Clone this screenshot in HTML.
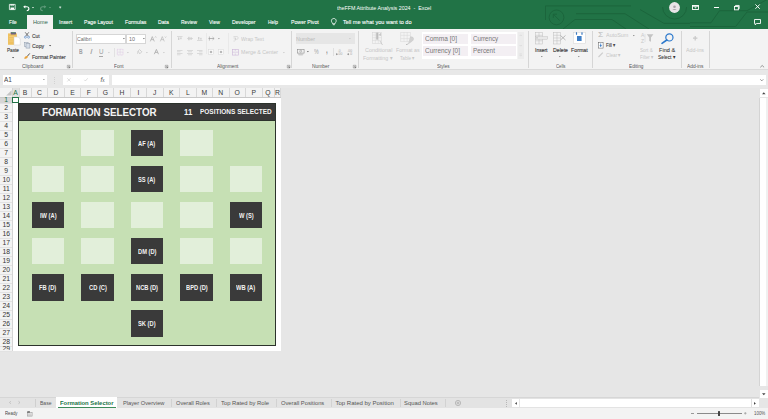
<!DOCTYPE html><html><head><meta charset="utf-8"><style>
*{margin:0;padding:0;box-sizing:border-box}
html,body{width:768px;height:419px;overflow:hidden;background:#e6e6e6;font-family:"Liberation Sans",sans-serif;position:relative}
.a{position:absolute}
.t{position:absolute;white-space:nowrap;line-height:20px;height:20px;transform-origin:0 0}
svg{position:absolute;overflow:visible}
</style></head><body>
<div class="a" style="left:0px;top:0px;width:768px;height:29px;background:#217346;"></div>
<svg style="left:0;top:0" width="768" height="29" viewBox="0 0 768 29"><g fill="none" stroke="#1a6139" stroke-width="1" opacity="0.75"><path d="M545.5 20 V5.9 H631"/><circle cx="556.5" cy="17.4" r="7.4"/><path d="M553.3 14.2 L559.7 20.6 M553.3 14.2 H557 M553.3 14.2 V17.9"/><path d="M576 13.7 H625 L649 29"/><path d="M563 29 L575 19.5 H612 L626 29"/><path d="M662.6 7 A12 12 0 0 0 686.6 7"/><path d="M640 9.5 L664 23.4 H690"/><path d="M690 22.8 H711 L719.5 10.7 H747 L768 -1"/><path d="M690 26.5 H735.7 L747 12 H768"/></g></svg>
<svg style="left:8.9px;top:4.3px;" width="6.6" height="6" viewBox="0 0 6.6 6"><path d="M0.4 0.4 H6.2 V5.6 H0.4 Z" fill="none" stroke="#fff" stroke-width="0.8"/><rect x="1.5" y="3.5" width="3.6" height="2.1" fill="#fff"/><rect x="1.9" y="0.4" width="2.8" height="1.4" fill="none" stroke="#fff" stroke-width="0.6"/></svg>
<svg style="left:22.5px;top:4.6px;" width="6.5" height="6" viewBox="0 0 6.5 6"><path d="M0.2 1.8 L2.3 0.2 V3.4Z" fill="#fff"/><path d="M2 1.8 H3.6 C5.2 1.8 5.9 2.9 5.9 3.8 C5.9 5 5 5.6 3.8 5.6" fill="none" stroke="#fff" stroke-width="1.1"/></svg>
<svg style="left:31.8px;top:7px;" width="2" height="1.2" viewBox="0 0 2 1.2"><path d="M0 0 H2 L1 1.2Z" fill="#fff"/></svg>
<svg style="left:39.6px;top:4.6px;" width="6.5" height="6" viewBox="0 0 6.5 6"><g opacity="0.3"><path d="M6.3 1.8 L4.2 0.2 V3.4Z" fill="#fff"/><path d="M4.5 1.8 H2.9 C1.3 1.8 0.6 2.9 0.6 3.8 C0.6 5 1.5 5.6 2.7 5.6" fill="none" stroke="#fff" stroke-width="1.1"/></g></svg>
<svg style="left:49.4px;top:7px;" width="2" height="1.2" viewBox="0 0 2 1.2"><path d="M0 0 H2 L1 1.2Z" fill="#fff" opacity="0.35"/></svg>
<svg style="left:59px;top:6px;" width="2.4" height="3" viewBox="0 0 2.4 3"><rect x="0.2" y="0" width="2" height="0.5" fill="#fff" opacity="0.8"/><path d="M0 1.2 H2.4 L1.2 2.5Z" fill="#fff"/></svg>
<div class="t" style="left:337px;top:-2.51px;font-size:6px;color:#fff;transform:scaleX(0.886);">theFFM Attribute Analysis 2024&nbsp; - &nbsp;Excel</div>
<svg style="left:669px;top:1.5px;" width="11" height="11" viewBox="0 0 11 11"><circle cx="5.5" cy="5.5" r="5.4" fill="#e9e4e8"/><circle cx="5.5" cy="4.7" r="1.3" fill="#a9a3a8"/><path d="M3.4 8 Q5.5 5.8 7.6 8Z" fill="#a9a3a8"/></svg>
<svg style="left:692px;top:4.6px;" width="7" height="5" viewBox="0 0 7 5"><rect x="0.5" y="0.5" width="6" height="4" fill="none" stroke="#fff" stroke-width="0.9"/><rect x="0.5" y="0.5" width="6" height="1.2" fill="#fff"/><path d="M2.3 2.3 L3.5 3.6 L4.7 2.3Z" fill="#fff"/></svg>
<div class="a" style="left:713.6px;top:6.6px;width:5px;height:0.8px;background:#fff;"></div>
<svg style="left:734px;top:4.5px;" width="5.6" height="5.2" viewBox="0 0 5.6 5.2"><rect x="0.45" y="1.45" width="3.9" height="3.4" fill="none" stroke="#fff" stroke-width="0.9"/><path d="M1.5 1.4 V0.45 H5.15 V3.8 H4.3" fill="none" stroke="#fff" stroke-width="0.9"/></svg>
<svg style="left:755px;top:4.4px;" width="5.2" height="5.2" viewBox="0 0 5.2 5.2"><path d="M0.4 0.4 L4.8 4.8 M4.8 0.4 L0.4 4.8" stroke="#fff" stroke-width="0.95"/></svg>
<svg style="left:754px;top:18.6px;" width="7" height="6.6" viewBox="0 0 7 6.6"><path d="M0.5 0.5 H6.5 V4.5 H2.5 L1.2 6 V4.5 H0.5 Z" fill="none" stroke="#fff" stroke-width="0.9"/></svg>
<div class="a" style="left:27.3px;top:14.8px;width:25.8px;height:14.2px;background:#f3f3f3;"></div>
<div class="t" style="left:9.4px;top:11.89px;font-size:6px;color:#fff;transform:scaleX(0.807);-webkit-text-stroke:0.12px #fff;">File</div>
<div class="t" style="left:59px;top:11.89px;font-size:6px;color:#fff;transform:scaleX(0.880);-webkit-text-stroke:0.12px #fff;">Insert</div>
<div class="t" style="left:84px;top:11.89px;font-size:6px;color:#fff;transform:scaleX(0.855);-webkit-text-stroke:0.12px #fff;">Page Layout</div>
<div class="t" style="left:124.8px;top:11.89px;font-size:6px;color:#fff;transform:scaleX(0.857);-webkit-text-stroke:0.12px #fff;">Formulas</div>
<div class="t" style="left:158.1px;top:11.89px;font-size:6px;color:#fff;transform:scaleX(0.859);-webkit-text-stroke:0.12px #fff;">Data</div>
<div class="t" style="left:181px;top:11.89px;font-size:6px;color:#fff;transform:scaleX(0.813);-webkit-text-stroke:0.12px #fff;">Review</div>
<div class="t" style="left:208.75px;top:11.89px;font-size:6px;color:#fff;transform:scaleX(0.849);-webkit-text-stroke:0.12px #fff;">View</div>
<div class="t" style="left:232px;top:11.89px;font-size:6px;color:#fff;transform:scaleX(0.859);-webkit-text-stroke:0.12px #fff;">Developer</div>
<div class="t" style="left:268px;top:11.89px;font-size:6px;color:#fff;transform:scaleX(0.811);-webkit-text-stroke:0.12px #fff;">Help</div>
<div class="t" style="left:290.6px;top:11.89px;font-size:6px;color:#fff;transform:scaleX(0.868);-webkit-text-stroke:0.12px #fff;">Power Pivot</div>
<div class="t" style="left:32.8px;top:11.89px;font-size:6px;color:#32654a;transform:scaleX(0.924);">Home</div>
<svg style="left:331px;top:17.8px;" width="5.6" height="7.4" viewBox="0 0 5.6 7.4"><path d="M2.8 0.5 C0.2 0.5 -0.3 3.6 1.4 4.9 L1.6 5.8 H4 L4.2 4.9 C5.9 3.6 5.4 0.5 2.8 0.5Z" fill="none" stroke="#fff" stroke-width="0.8"/><path d="M1.8 6.7 H3.8" stroke="#fff" stroke-width="0.8"/></svg>
<div class="t" style="left:342.5px;top:11.89px;font-size:6px;color:#fff;transform:scaleX(0.925);-webkit-text-stroke:0.1px #fff;">Tell me what you want to do</div>
<div class="a" style="left:0px;top:29px;width:768px;height:41px;background:#f3f3f3;"></div>
<div class="a" style="left:0px;top:69.4px;width:768px;height:0.8px;background:#dadada;"></div>
<div class="a" style="left:71.9px;top:30.5px;width:0.8px;height:37.5px;background:#d6d6d6;"></div>
<div class="a" style="left:170.6px;top:30.5px;width:0.8px;height:37.5px;background:#d6d6d6;"></div>
<div class="a" style="left:291.3px;top:30.5px;width:0.8px;height:37.5px;background:#d6d6d6;"></div>
<div class="a" style="left:357.8px;top:30.5px;width:0.8px;height:37.5px;background:#d6d6d6;"></div>
<div class="a" style="left:528px;top:30.5px;width:0.8px;height:37.5px;background:#d6d6d6;"></div>
<div class="a" style="left:592.1px;top:30.5px;width:0.8px;height:37.5px;background:#d6d6d6;"></div>
<div class="a" style="left:681.2px;top:30.5px;width:0.8px;height:37.5px;background:#d6d6d6;"></div>
<div class="a" style="left:709px;top:30.5px;width:0.8px;height:37.5px;background:#d6d6d6;"></div>
<div class="t" style="left:22px;top:56.39px;font-size:5.6px;color:#555;transform:scaleX(0.885);">Clipboard</div>
<div class="t" style="left:113.5px;top:56.39px;font-size:5.6px;color:#555;transform:scaleX(0.848);">Font</div>
<div class="t" style="left:216.6px;top:56.39px;font-size:5.6px;color:#555;transform:scaleX(0.860);">Alignment</div>
<div class="t" style="left:312px;top:56.39px;font-size:5.6px;color:#555;transform:scaleX(0.874);">Number</div>
<div class="t" style="left:437px;top:56.39px;font-size:5.6px;color:#555;transform:scaleX(0.819);">Styles</div>
<div class="t" style="left:555.5px;top:56.39px;font-size:5.6px;color:#555;transform:scaleX(0.762);">Cells</div>
<div class="t" style="left:629.4px;top:56.39px;font-size:5.6px;color:#555;transform:scaleX(0.840);">Editing</div>
<div class="t" style="left:687px;top:56.39px;font-size:5.6px;color:#555;transform:scaleX(0.869);">Add-ins</div>
<svg style="left:67.4px;top:64.9px;" width="3.2" height="3.2" viewBox="0 0 3.2 3.2"><path d="M0.3 0.3 H2.9 V2.9 H0.3Z" fill="none" stroke="#777" stroke-width="0.5"/><path d="M1.2 1.2 L2.6 2.6 M2.6 1.6 V2.6 H1.6" stroke="#555" stroke-width="0.5" fill="none"/></svg>
<svg style="left:165.4px;top:64.9px;" width="3.2" height="3.2" viewBox="0 0 3.2 3.2"><path d="M0.3 0.3 H2.9 V2.9 H0.3Z" fill="none" stroke="#777" stroke-width="0.5"/><path d="M1.2 1.2 L2.6 2.6 M2.6 1.6 V2.6 H1.6" stroke="#555" stroke-width="0.5" fill="none"/></svg>
<svg style="left:286.7px;top:64.9px;" width="3.2" height="3.2" viewBox="0 0 3.2 3.2"><path d="M0.3 0.3 H2.9 V2.9 H0.3Z" fill="none" stroke="#777" stroke-width="0.5"/><path d="M1.2 1.2 L2.6 2.6 M2.6 1.6 V2.6 H1.6" stroke="#555" stroke-width="0.5" fill="none"/></svg>
<svg style="left:352.9px;top:64.9px;" width="3.2" height="3.2" viewBox="0 0 3.2 3.2"><path d="M0.3 0.3 H2.9 V2.9 H0.3Z" fill="none" stroke="#777" stroke-width="0.5"/><path d="M1.2 1.2 L2.6 2.6 M2.6 1.6 V2.6 H1.6" stroke="#555" stroke-width="0.5" fill="none"/></svg>
<svg style="left:8px;top:32px;" width="12.6" height="13.2" viewBox="0 0 12.6 13.2"><rect x="0" y="1.4" width="8.9" height="11.4" fill="#efc160"/><path d="M1.2 4.5 H7.6 M1.2 6.8 H5.5 M1.2 9.1 H5.5" stroke="#f6d990" stroke-width="0.5"/><rect x="2.7" y="0" width="5.3" height="2.5" rx="0.4" fill="#6e6480"/><rect x="3.4" y="0" width="3.8" height="0.8" fill="#6a9a70"/><path d="M6 5 H10.3 L12.3 7 V13 H6Z" fill="#fff" stroke="#cfcfcf" stroke-width="0.5"/></svg>
<div class="t" style="left:7.1px;top:40.29px;font-size:6px;color:#444;transform:scaleX(0.776);-webkit-text-stroke:0.15px currentColor;">Paste</div>
<svg style="left:11.7px;top:56.6px;" width="2.2" height="1.3" viewBox="0 0 2.2 1.3"><path d="M0 0 H2.2 L1.1 1.3Z" fill="#444"/></svg>
<svg style="left:24px;top:32.1px;" width="6" height="6.6" viewBox="0 0 6 6.6"><path d="M1.2 0.3 L4.4 4.2 M4.8 0.3 L1.6 4.2" stroke="#555" stroke-width="0.8"/><circle cx="1.4" cy="5.2" r="1" fill="none" stroke="#6f9bd0" stroke-width="0.8"/><circle cx="4.6" cy="5.2" r="1" fill="none" stroke="#6f9bd0" stroke-width="0.8"/></svg>
<div class="t" style="left:32.2px;top:25.59px;font-size:6px;color:#444;transform:scaleX(0.825);-webkit-text-stroke:0.15px currentColor;">Cut</div>
<svg style="left:24px;top:41.8px;" width="6.2" height="6.3" viewBox="0 0 6.2 6.3"><rect x="0.3" y="0.3" width="3.8" height="4.4" fill="#e4e8ee" stroke="#8a97a8" stroke-width="0.5"/><rect x="2" y="1.7" width="3.9" height="4.4" fill="#d5dde8" stroke="#8a97a8" stroke-width="0.5"/></svg>
<div class="t" style="left:32.2px;top:35.79px;font-size:6px;color:#444;transform:scaleX(0.864);-webkit-text-stroke:0.15px currentColor;">Copy</div>
<svg style="left:48.9px;top:45.2px;" width="2.2" height="1.3" viewBox="0 0 2.2 1.3"><path d="M0 0 H2.2 L1.1 1.3Z" fill="#444"/></svg>
<svg style="left:24px;top:52.6px;" width="6.2" height="6.2" viewBox="0 0 6.2 6.2"><path d="M3.2 3.4 L5.8 0.4" stroke="#444" stroke-width="0.9"/><path d="M0.2 5.8 C0.6 3.5 1.8 2.6 3.4 3 L4 3.8 C3.6 5.2 2 6 0.2 5.8Z" fill="#e8a33d"/></svg>
<div class="t" style="left:32.2px;top:46.89px;font-size:6px;color:#444;transform:scaleX(0.852);-webkit-text-stroke:0.15px currentColor;">Format Painter</div>
<div class="a" style="left:76.2px;top:33.6px;width:50.2px;height:10px;background:#fff;border:0.6px solid #d6d6d6"></div>
<div class="a" style="left:126.4px;top:33.6px;width:19.8px;height:10px;background:#fff;border:0.6px solid #d6d6d6"></div>
<div class="t" style="left:77.2px;top:28.69px;font-size:6px;color:#6a6a6a;transform:scaleX(0.858);">Calibri</div>
<svg style="left:122.7px;top:38px;" width="1.8" height="1.3" viewBox="0 0 1.8 1.3"><path d="M0 0 H1.8 L0.9 1.3Z" fill="#666"/></svg>
<div class="t" style="left:129.3px;top:28.69px;font-size:6px;color:#707070;transform:scaleX(0.886);">10</div>
<svg style="left:142.5px;top:38px;" width="1.8" height="1.3" viewBox="0 0 1.8 1.3"><path d="M0 0 H1.8 L0.9 1.3Z" fill="#666"/></svg>
<svg style="left:149.5px;top:36px;" width="6.4" height="5.6" viewBox="0 0 6.4 5.6"><path d="M0.3 5.4 L2.3 0.6 L4.3 5.4 M1.1 3.6 H3.5" fill="none" stroke="#b0b0b0" stroke-width="0.8"/><path d="M4.8 1.6 L5.6 0.5 L6.4 1.6" fill="none" stroke="#b0b0b0" stroke-width="0.5"/></svg>
<svg style="left:159.5px;top:36px;" width="6.4" height="5.6" viewBox="0 0 6.4 5.6"><path d="M0.3 5.4 L2.3 0.6 L4.3 5.4 M1.1 3.6 H3.5" fill="none" stroke="#b8b8b8" stroke-width="0.7"/><path d="M4.8 0.5 L5.6 1.6 L6.4 0.5" fill="none" stroke="#b8b8b8" stroke-width="0.5"/></svg>
<div class="t" style="left:79.2px;top:42.39px;font-size:7.2px;color:#a0a0a0;font-weight:bold;transform:scaleX(0.694);">B</div>
<div class="t" style="left:89.6px;top:42.39px;font-size:7.2px;color:#a0a0a0;transform:scaleX(1.290);font-style:italic;">I</div>
<div class="t" style="left:98.8px;top:41.99px;font-size:7px;color:#a0a0a0;transform:scaleX(0.893);">U</div>
<div class="a" style="left:98.8px;top:55.6px;width:4.5px;height:0.5px;background:#a8a8a8;"></div>
<svg style="left:108.2px;top:51.8px;" width="1.8" height="1.3" viewBox="0 0 1.8 1.3"><path d="M0 0 H1.8 L0.9 1.3Z" fill="#c6c6c6"/></svg>
<div class="a" style="left:114.2px;top:47.5px;width:0.6px;height:9px;background:#e2e2e2;"></div>
<svg style="left:117px;top:49.2px;" width="6.3" height="6.3" viewBox="0 0 6.3 6.3"><rect x="0.3" y="0.3" width="5.7" height="5.7" fill="none" stroke="#d8b8e0" stroke-width="0.6" stroke-dasharray="0.8 0.6"/><path d="M3.15 0.3 V6 M0.3 3.15 H6" stroke="#d8c8e0" stroke-width="0.4"/></svg>
<svg style="left:127.1px;top:51.8px;" width="1.8" height="1.3" viewBox="0 0 1.8 1.3"><path d="M0 0 H1.8 L0.9 1.3Z" fill="#c6c6c6"/></svg>
<svg style="left:137.1px;top:49px;" width="5.4" height="6.4" viewBox="0 0 5.4 6.4"><path d="M1 2.2 L2.6 0.6 L4.8 2.8 L2.8 4.8 Z" fill="none" stroke="#b8b8b8" stroke-width="0.6"/><path d="M1 2.2 C0.4 3.5 0.5 4.4 0.8 5" stroke="#b8b8b8" stroke-width="0.5" fill="none"/></svg>
<svg style="left:146px;top:51.8px;" width="1.8" height="1.3" viewBox="0 0 1.8 1.3"><path d="M0 0 H1.8 L0.9 1.3Z" fill="#c6c6c6"/></svg>
<svg style="left:154px;top:49px;" width="4.8" height="5.4" viewBox="0 0 4.8 5.4"><path d="M0.3 5.2 L2.4 0.4 L4.5 5.2 M1.1 3.4 H3.7" fill="none" stroke="#a8a8a8" stroke-width="0.8"/></svg>
<svg style="left:162.9px;top:51.8px;" width="1.8" height="1.3" viewBox="0 0 1.8 1.3"><path d="M0 0 H1.8 L0.9 1.3Z" fill="#c6c6c6"/></svg>
<svg style="left:177px;top:35.5px;" width="5.5" height="5" viewBox="0 0 5.5 5"><rect x="0" y="0" width="5.5" height="0.7" fill="#cfcfcf"/><rect x="1" y="1.4" width="1.4" height="2.6" fill="#cfcfcf"/><rect x="3.2" y="1.4" width="1.4" height="1.8" fill="#cfcfcf"/></svg>
<svg style="left:186.6px;top:35.5px;" width="6" height="5" viewBox="0 0 6 5"><rect x="0" y="2.2" width="6" height="0.7" fill="#cfcfcf"/><rect x="1.2" y="0.8" width="1.4" height="3.5" fill="#cfcfcf"/><rect x="3.4" y="1.3" width="1.4" height="2.5" fill="#cfcfcf"/></svg>
<svg style="left:197.3px;top:35.5px;" width="5.5" height="5" viewBox="0 0 5.5 5"><rect x="0" y="4.3" width="5.5" height="0.7" fill="#cfcfcf"/><rect x="1" y="1" width="1.4" height="2.6" fill="#cfcfcf"/><rect x="3.2" y="1.8" width="1.4" height="1.8" fill="#cfcfcf"/></svg>
<svg style="left:208.3px;top:35.8px;" width="7" height="5" viewBox="0 0 7 5"><path d="M0.5 2.5 H6" stroke="#9a9a9a" stroke-width="0.7"/><path d="M4.5 1 L6.2 2.5 L4.5 4" fill="none" stroke="#9a9a9a" stroke-width="0.6"/><path d="M1.4 0.5 V4.6" stroke="#9a9a9a" stroke-width="0.6"/></svg>
<svg style="left:218.3px;top:38.1px;" width="1.8" height="1.3" viewBox="0 0 1.8 1.3"><path d="M0 0 H1.8 L0.9 1.3Z" fill="#9a9a9a"/></svg>
<div class="a" style="left:206px;top:33px;width:0.5px;height:21px;background:#e9e9e9;"></div>
<div class="a" style="left:228.4px;top:33px;width:0.5px;height:21px;background:#e9e9e9;"></div>
<svg style="left:232.5px;top:35.6px;" width="5.6" height="6" viewBox="0 0 5.6 6"><path d="M0.5 0.5 H4 C5.6 0.5 5.6 3.3 4 3.3 H2.2" fill="none" stroke="#cfcfcf" stroke-width="0.6"/><path d="M0.5 2 H3 M0.5 5 H2" stroke="#cfcfcf" stroke-width="0.6"/><path d="M2.8 2.4 L1.8 3.3 L2.8 4.2" fill="none" stroke="#aaa" stroke-width="0.5"/></svg>
<div class="t" style="left:241px;top:28.69px;font-size:6px;color:#c6c6c6;transform:scaleX(0.851);">Wrap Text</div>
<svg style="left:177px;top:49.6px;" width="5.5" height="6" viewBox="0 0 5.5 6"><rect x="0" y="0.0" width="5.5" height="0.7" fill="#cfcfcf"/><rect x="0" y="1.5" width="3.5" height="0.7" fill="#cfcfcf"/><rect x="0" y="3.0" width="5.5" height="0.7" fill="#cfcfcf"/><rect x="0" y="4.5" width="3.5" height="0.7" fill="#cfcfcf"/></svg>
<svg style="left:186.6px;top:49.6px;" width="6" height="6" viewBox="0 0 6 6"><rect x="0.0" y="0.0" width="6" height="0.7" fill="#cfcfcf"/><rect x="1.0" y="1.5" width="4" height="0.7" fill="#cfcfcf"/><rect x="0.0" y="3.0" width="6" height="0.7" fill="#cfcfcf"/><rect x="1.0" y="4.5" width="4" height="0.7" fill="#cfcfcf"/></svg>
<svg style="left:197.3px;top:49.6px;" width="5.5" height="6" viewBox="0 0 5.5 6"><rect x="0.0" y="0.0" width="5.5" height="0.7" fill="#cfcfcf"/><rect x="2.0" y="1.5" width="3.5" height="0.7" fill="#cfcfcf"/><rect x="0.0" y="3.0" width="5.5" height="0.7" fill="#cfcfcf"/><rect x="2.0" y="4.5" width="3.5" height="0.7" fill="#cfcfcf"/></svg>
<svg style="left:208px;top:49.2px;" width="6" height="6" viewBox="0 0 6 6"><rect x="0.3" y="0.3" width="5.4" height="5.4" fill="#fbfbfb" stroke="#d6d6d6" stroke-width="0.5"/><path d="M1.8 3 H4.2 M3 1.8 V4.2" stroke="#8a8a8a" stroke-width="0.7"/></svg>
<svg style="left:217.5px;top:49.2px;" width="6" height="6" viewBox="0 0 6 6"><rect x="0.3" y="0.3" width="5.4" height="5.4" fill="#fbfbfb" stroke="#d6d6d6" stroke-width="0.5"/><path d="M1.8 3 H4.2 M3 1.8 V4.2" stroke="#8a8a8a" stroke-width="0.7"/></svg>
<svg style="left:232.2px;top:49px;" width="6.6" height="6.4" viewBox="0 0 6.6 6.4"><rect x="0.3" y="0.3" width="6" height="5.8" fill="none" stroke="#cbb5d8" stroke-width="0.6"/><path d="M0.3 3.2 H6.3 M3.3 0.3 V2 M3.3 4.4 V6.1" stroke="#cbb5d8" stroke-width="0.5"/></svg>
<div class="t" style="left:241px;top:42.39px;font-size:6px;color:#c6c6c6;transform:scaleX(0.876);">Merge &amp; Center</div>
<svg style="left:283.1px;top:51.8px;" width="1.8" height="1.3" viewBox="0 0 1.8 1.3"><path d="M0 0 H1.8 L0.9 1.3Z" fill="#c6c6c6"/></svg>
<div class="a" style="left:295.5px;top:33.1px;width:59.7px;height:10.5px;background:#e6e6e6;"></div>
<div class="t" style="left:296.4px;top:28.59px;font-size:6px;color:#b9b9b9;transform:scaleX(0.895);">Number</div>
<svg style="left:349.3px;top:38px;" width="1.8" height="1.3" viewBox="0 0 1.8 1.3"><path d="M0 0 H1.8 L0.9 1.3Z" fill="#c4c4c4"/></svg>
<svg style="left:296.8px;top:48.6px;" width="7.4" height="6.4" viewBox="0 0 7.4 6.4"><rect x="0.3" y="0.3" width="6.8" height="3.8" fill="none" stroke="#8c8c8c" stroke-width="0.6"/><circle cx="3.7" cy="2.2" r="1" fill="none" stroke="#8c8c8c" stroke-width="0.5"/><path d="M1 5.2 H6.4 M1.6 6 H5.8" stroke="#a8a8a8" stroke-width="0.5"/></svg>
<svg style="left:307.3px;top:51.4px;" width="1.8" height="1.3" viewBox="0 0 1.8 1.3"><path d="M0 0 H1.8 L0.9 1.3Z" fill="#555"/></svg>
<div class="t" style="left:313.9px;top:41.79px;font-size:7.2px;color:#a6a6a6;transform:scaleX(0.733);">%</div>
<div class="t" style="left:326.2px;top:40.19px;font-size:9px;color:#8a8a8a;font-weight:bold;transform:scaleX(0.675);">,</div>
<div class="a" style="left:332.6px;top:48px;width:0.5px;height:8px;background:#e0e0e0;"></div>
<svg style="left:336px;top:48.6px;" width="7.4" height="6.6" viewBox="0 0 7.4 6.6"><text x="1.8" y="2.8" font-size="3.4" fill="#a8a8a8" font-family="Liberation Sans">.0</text><text x="1.6" y="6.4" font-size="3.4" fill="#a8a8a8" font-family="Liberation Sans">.00</text><path d="M0 5.2 H2 M0 5.2 L0.9 4.4 M0 5.2 L0.9 6" stroke="#6a6a6a" stroke-width="0.5" fill="none"/></svg>
<svg style="left:347.4px;top:48.6px;" width="6.4" height="6.6" viewBox="0 0 6.4 6.6"><text x="0.4" y="2.8" font-size="3.4" fill="#a8a8a8" font-family="Liberation Sans">.00</text><text x="2.4" y="6.4" font-size="3.4" fill="#a8a8a8" font-family="Liberation Sans">.0</text><path d="M0 5.2 H2 M2 5.2 L1.1 4.4 M2 5.2 L1.1 6" stroke="#6a6a6a" stroke-width="0.5" fill="none"/></svg>
<svg style="left:372px;top:31.9px;" width="12.6" height="13.4" viewBox="0 0 12.6 13.4"><g stroke="#d4d4d4" stroke-width="0.5" fill="none"><rect x="0.3" y="0.3" width="9" height="11"/><path d="M3.3 0.3 V11.3 M6.3 0.3 V11.3 M0.3 3 H9.3 M0.3 5.7 H9.3 M0.3 8.4 H9.3"/></g><rect x="4.2" y="0.6" width="2" height="7" fill="#bdbdbd"/><path d="M6.5 3 L9 0.8 V4Z" fill="#c8c8c8"/><path d="M8 9 L10.5 13" stroke="#bdbdbd" stroke-width="0.7"/></svg>
<div class="t" style="left:364.6px;top:40.24px;font-size:6px;color:#c6c6c6;transform:scaleX(0.912);">Conditional</div>
<div class="t" style="left:362.5px;top:47.74px;font-size:6px;color:#c6c6c6;transform:scaleX(0.876);">Formatting ▾</div>
<svg style="left:400px;top:31.9px;" width="15.4" height="13.4" viewBox="0 0 15.4 13.4"><g stroke="#d8d8d8" stroke-width="0.5" fill="none"><rect x="0.8" y="0.3" width="9.5" height="9.5"/><path d="M0.8 3.4 H10.3 M0.8 6.6 H10.3 M4 0.3 V9.8 M7.2 0.3 V9.8"/></g><path d="M10 5 C14 4 15 8 11 10 L8 12" fill="#d2d2d2" stroke="#c4c4c4" stroke-width="0.5"/><path d="M7.5 11.8 L6.5 13" stroke="#999" stroke-width="1"/></svg>
<div class="t" style="left:396.3px;top:40.24px;font-size:6px;color:#c6c6c6;transform:scaleX(0.870);">Format as</div>
<div class="t" style="left:399.6px;top:47.74px;font-size:6px;color:#c6c6c6;transform:scaleX(0.770);">Table ▾</div>
<div class="a" style="left:422px;top:31.6px;width:95px;height:27px;background:#fff;"></div>
<div class="a" style="left:423px;top:33.6px;width:45.4px;height:10.2px;background:#f3eff3;"></div>
<div class="a" style="left:470.8px;top:33.6px;width:44.8px;height:10.2px;background:#f3eff3;"></div>
<div class="a" style="left:423px;top:46px;width:45.4px;height:10.2px;background:#f3eff3;"></div>
<div class="a" style="left:470.8px;top:46px;width:44.8px;height:10.2px;background:#f3eff3;"></div>
<div class="t" style="left:425px;top:28.69px;font-size:6.8px;color:#777;transform:scaleX(0.962);">Comma [0]</div>
<div class="t" style="left:472.6px;top:28.69px;font-size:6.8px;color:#777;transform:scaleX(0.914);">Currency</div>
<div class="t" style="left:425px;top:41.09px;font-size:6.8px;color:#777;transform:scaleX(0.943);">Currency [0]</div>
<div class="t" style="left:472.6px;top:41.09px;font-size:6.8px;color:#777;transform:scaleX(0.935);">Percent</div>
<div class="a" style="left:517.6px;top:31.6px;width:6.8px;height:27px;background:#ececec;"></div>
<svg style="left:519.3px;top:33.8px;" width="3.4" height="23" viewBox="0 0 3.4 23"><path d="M0.6 2 L1.7 0.8 L2.8 2" fill="none" stroke="#ccc" stroke-width="0.5"/><path d="M0.6 11 L1.7 12.2 L2.8 11" fill="none" stroke="#ccc" stroke-width="0.5"/><path d="M0.6 20 H2.8 M0.6 21 L1.7 22.2 L2.8 21" fill="none" stroke="#ccc" stroke-width="0.5"/></svg>
<svg style="left:535.4px;top:31.9px;" width="13" height="12.9" viewBox="0 0 13 12.9"><g stroke="#bdbdbd" stroke-width="0.5" fill="none"><rect x="0.5" y="0.5" width="7" height="11.5"/><path d="M4 0.5 V12 M0.5 3.3 H7.5 M0.5 6 H7.5 M0.5 8.8 H7.5"/></g><rect x="0.6" y="4.6" width="12" height="2.6" fill="#e8e8e8" stroke="#b8b8b8" stroke-width="0.4"/><path d="M1 5.9 H3" stroke="#aaa" stroke-width="0.6"/></svg>
<div class="t" style="left:535.4px;top:40.24px;font-size:6px;color:#3a3a3a;transform:scaleX(0.833);-webkit-text-stroke:0.15px currentColor;">Insert</div>
<svg style="left:540.9px;top:56.3px;" width="1.6" height="1.3" viewBox="0 0 1.6 1.3"><path d="M0 0 H1.6 L0.8 1.3Z" fill="#777"/></svg>
<svg style="left:553px;top:31.9px;" width="13.6" height="12.9" viewBox="0 0 13.6 12.9"><g stroke="#bdbdbd" stroke-width="0.5" fill="none"><rect x="0.5" y="0.5" width="7" height="11.5"/><path d="M4 0.5 V12 M0.5 3.3 H7.5 M0.5 6 H7.5 M0.5 8.8 H7.5"/></g><path d="M7.5 3.5 L12.5 8 M12.5 3.5 L7.5 8" stroke="#a8a8a8" stroke-width="0.8"/></svg>
<div class="t" style="left:552.9px;top:40.24px;font-size:6px;color:#3a3a3a;transform:scaleX(0.865);-webkit-text-stroke:0.15px currentColor;">Delete</div>
<svg style="left:559.2px;top:56.3px;" width="1.6" height="1.3" viewBox="0 0 1.6 1.3"><path d="M0 0 H1.6 L0.8 1.3Z" fill="#777"/></svg>
<svg style="left:572.9px;top:31.9px;" width="12.6" height="12" viewBox="0 0 12.6 12"><rect x="0.3" y="0.3" width="12" height="11.4" fill="#fff" stroke="#d0d0d0" stroke-width="0.5"/><path d="M3.5 0.2 V2.2 M9 0.2 V2.2" stroke="#3b78c0" stroke-width="1"/><path d="M2.5 1.8 L3.5 3 L4.5 1.8 M8 1.8 L9 3 L10 1.8" fill="#3b78c0"/><rect x="4" y="4" width="4.6" height="5" fill="#3d7dc6"/></svg>
<div class="t" style="left:570.8px;top:40.24px;font-size:6px;color:#3a3a3a;transform:scaleX(0.879);-webkit-text-stroke:0.15px currentColor;">Format</div>
<svg style="left:578px;top:56.3px;" width="1.6" height="1.3" viewBox="0 0 1.6 1.3"><path d="M0 0 H1.6 L0.8 1.3Z" fill="#777"/></svg>
<div class="t" style="left:598.4px;top:25.29px;font-size:6.6px;color:#b8b8b8;transform:scaleX(1.295);">Σ</div>
<div class="t" style="left:606px;top:25.29px;font-size:6px;color:#c6c6c6;transform:scaleX(0.907);">AutoSum</div>
<svg style="left:633.3px;top:34.7px;" width="1.6" height="1.3" viewBox="0 0 1.6 1.3"><path d="M0 0 H1.6 L0.8 1.3Z" fill="#777"/></svg>
<svg style="left:598px;top:41.6px;" width="5.4" height="6.4" viewBox="0 0 5.4 6.4"><rect x="0.3" y="0.3" width="4.8" height="5.8" fill="#fff" stroke="#555" stroke-width="0.5"/><path d="M2.7 1.5 V4.2" stroke="#2e75c5" stroke-width="0.8"/><path d="M1.4 3.3 L2.7 4.9 L4 3.3Z" fill="#2e75c5"/></svg>
<div class="t" style="left:605.5px;top:34.99px;font-size:6px;color:#444;transform:scaleX(0.745);-webkit-text-stroke:0.15px currentColor;">Fill ▾</div>
<svg style="left:598px;top:52.4px;" width="5.4" height="5.4" viewBox="0 0 5.4 5.4"><path d="M0.5 5 L4.8 0.6" stroke="#cfcfcf" stroke-width="1.3"/></svg>
<div class="t" style="left:605.5px;top:45.39px;font-size:6px;color:#c6c6c6;transform:scaleX(0.780);">Clear ▾</div>
<svg style="left:641px;top:31.9px;" width="12.6" height="11.6" viewBox="0 0 12.6 11.6"><text x="0" y="4.6" font-size="5" fill="#c8c8c8" font-family="Liberation Sans">A</text><text x="0" y="11" font-size="5" fill="#c8c8c8" font-family="Liberation Sans">Z</text><path d="M4 2 V10" stroke="#ccc" stroke-width="0.5"/><path d="M5.8 2.2 H12.4 L10 5.6 V9.8 L8.2 9 V5.6Z" fill="#c4c4c4"/></svg>
<div class="t" style="left:639.8px;top:40.19px;font-size:6px;color:#c6c6c6;transform:scaleX(0.761);">Sort &amp;</div>
<div class="t" style="left:639.8px;top:47.09px;font-size:6px;color:#c6c6c6;transform:scaleX(0.738);">Filter ▾</div>
<svg style="left:660.5px;top:33px;" width="13.2" height="11" viewBox="0 0 13.2 11"><circle cx="8.4" cy="4.4" r="3.6" fill="none" stroke="#2b78cc" stroke-width="1.2"/><path d="M5.8 7 L1 10.4" stroke="#2b78cc" stroke-width="1.6" stroke-linecap="round"/></svg>
<div class="t" style="left:658.7px;top:40.19px;font-size:6px;color:#333;transform:scaleX(0.928);-webkit-text-stroke:0.06px currentColor;">Find &amp;</div>
<div class="t" style="left:657.6px;top:47.09px;font-size:6px;color:#333;transform:scaleX(0.806);-webkit-text-stroke:0.06px currentColor;">Select ▾</div>
<svg style="left:693px;top:35.6px;" width="4.4" height="4.4" viewBox="0 0 4.4 4.4"><path d="M2.2 0 V4.4 M0 2.2 H4.4" stroke="#c8c8c8" stroke-width="1.2"/></svg>
<div class="t" style="left:685.7px;top:39.99px;font-size:6px;color:#c6c6c6;transform:scaleX(0.885);">Add-ins</div>
<svg style="left:760px;top:65.4px;" width="4.4" height="2.6" viewBox="0 0 4.4 2.6"><path d="M0.3 2.3 L2.2 0.5 L4.1 2.3" fill="none" stroke="#555" stroke-width="0.6"/></svg>
<div class="a" style="left:0px;top:70.2px;width:768px;height:17.8px;background:#e8e8e8;"></div>
<div class="a" style="left:3.1px;top:74.6px;width:43.8px;height:10.2px;background:#fff;"></div>
<div class="t" style="left:4.4px;top:69.74px;font-size:6.6px;color:#444;transform:scaleX(0.965);">A1</div>
<svg style="left:43px;top:79.3px;" width="1.8" height="1" viewBox="0 0 1.8 1"><path d="M0 0 H1.8 L0.9 1Z" fill="#777"/></svg>
<div class="a" style="left:53.6px;top:76.5px;width:0.8px;height:0.8px;background:#d2d2d2;"></div>
<div class="a" style="left:53.6px;top:78.5px;width:0.8px;height:0.8px;background:#d2d2d2;"></div>
<div class="a" style="left:53.6px;top:80.5px;width:0.8px;height:0.8px;background:#d2d2d2;"></div>
<div class="a" style="left:53.6px;top:82.5px;width:0.8px;height:0.8px;background:#d2d2d2;"></div>
<div class="a" style="left:62.5px;top:74.6px;width:46.9px;height:10.2px;background:#fff;"></div>
<svg style="left:66.9px;top:77.6px;" width="3.8" height="3.8" viewBox="0 0 3.8 3.8"><path d="M0.3 0.3 L3.5 3.5 M3.5 0.3 L0.3 3.5" stroke="#c6c6c6" stroke-width="0.6"/></svg>
<svg style="left:83.6px;top:77.8px;" width="4" height="3.4" viewBox="0 0 4 3.4"><path d="M0.3 1.8 L1.4 3 L3.7 0.3" fill="none" stroke="#c6c6c6" stroke-width="0.6"/></svg>
<div class="t" style="left:100.4px;top:69.79px;font-size:6.6px;color:#555;"><i>f</i><span style="font-size:0.7em">x</span></div>
<div class="a" style="left:111.7px;top:74.6px;width:654.3px;height:10.2px;background:#fff;"></div>
<svg style="left:760.3px;top:78.9px;" width="3.6" height="2.2" viewBox="0 0 3.6 2.2"><path d="M0.3 0.3 L1.8 1.9 L3.3 0.3" fill="none" stroke="#555" stroke-width="0.6"/></svg>
<div class="a" style="left:0px;top:88px;width:281px;height:9.2px;background:#f3f3f3;"></div>
<div class="a" style="left:0px;top:97.2px;width:12.3px;height:254px;background:#f3f3f3;"></div>
<div class="a" style="left:12.3px;top:97.2px;width:268.7px;height:254px;background:#fff;"></div>
<div class="a" style="left:18.55px;top:88px;width:0.7px;height:9.2px;background:#d8d8d8;"></div>
<div class="a" style="left:30.95px;top:88px;width:0.7px;height:9.2px;background:#d8d8d8;"></div>
<div class="a" style="left:47.42px;top:88px;width:0.7px;height:9.2px;background:#d8d8d8;"></div>
<div class="a" style="left:63.89px;top:88px;width:0.7px;height:9.2px;background:#d8d8d8;"></div>
<div class="a" style="left:80.36px;top:88px;width:0.7px;height:9.2px;background:#d8d8d8;"></div>
<div class="a" style="left:96.83px;top:88px;width:0.7px;height:9.2px;background:#d8d8d8;"></div>
<div class="a" style="left:113.3px;top:88px;width:0.7px;height:9.2px;background:#d8d8d8;"></div>
<div class="a" style="left:129.77px;top:88px;width:0.7px;height:9.2px;background:#d8d8d8;"></div>
<div class="a" style="left:146.24px;top:88px;width:0.7px;height:9.2px;background:#d8d8d8;"></div>
<div class="a" style="left:162.71px;top:88px;width:0.7px;height:9.2px;background:#d8d8d8;"></div>
<div class="a" style="left:179.18px;top:88px;width:0.7px;height:9.2px;background:#d8d8d8;"></div>
<div class="a" style="left:195.65px;top:88px;width:0.7px;height:9.2px;background:#d8d8d8;"></div>
<div class="a" style="left:212.12px;top:88px;width:0.7px;height:9.2px;background:#d8d8d8;"></div>
<div class="a" style="left:228.59px;top:88px;width:0.7px;height:9.2px;background:#d8d8d8;"></div>
<div class="a" style="left:245.06px;top:88px;width:0.7px;height:9.2px;background:#d8d8d8;"></div>
<div class="a" style="left:261.53px;top:88px;width:0.7px;height:9.2px;background:#d8d8d8;"></div>
<div class="a" style="left:273.65px;top:88px;width:0.7px;height:9.2px;background:#d8d8d8;"></div>
<div class="a" style="left:280.45px;top:88px;width:0.7px;height:9.2px;background:#d8d8d8;"></div>
<div class="a" style="left:0px;top:102.65px;width:12.3px;height:0.7px;background:#e2e2e2;"></div>
<div class="a" style="left:0px;top:111.65px;width:12.3px;height:0.7px;background:#e2e2e2;"></div>
<div class="a" style="left:0px;top:120.65px;width:12.3px;height:0.7px;background:#e2e2e2;"></div>
<div class="a" style="left:0px;top:129.65px;width:12.3px;height:0.7px;background:#e2e2e2;"></div>
<div class="a" style="left:0px;top:138.65px;width:12.3px;height:0.7px;background:#e2e2e2;"></div>
<div class="a" style="left:0px;top:147.65px;width:12.3px;height:0.7px;background:#e2e2e2;"></div>
<div class="a" style="left:0px;top:156.65px;width:12.3px;height:0.7px;background:#e2e2e2;"></div>
<div class="a" style="left:0px;top:165.65px;width:12.3px;height:0.7px;background:#e2e2e2;"></div>
<div class="a" style="left:0px;top:174.65px;width:12.3px;height:0.7px;background:#e2e2e2;"></div>
<div class="a" style="left:0px;top:183.65px;width:12.3px;height:0.7px;background:#e2e2e2;"></div>
<div class="a" style="left:0px;top:192.65px;width:12.3px;height:0.7px;background:#e2e2e2;"></div>
<div class="a" style="left:0px;top:201.65px;width:12.3px;height:0.7px;background:#e2e2e2;"></div>
<div class="a" style="left:0px;top:210.65px;width:12.3px;height:0.7px;background:#e2e2e2;"></div>
<div class="a" style="left:0px;top:219.65px;width:12.3px;height:0.7px;background:#e2e2e2;"></div>
<div class="a" style="left:0px;top:228.65px;width:12.3px;height:0.7px;background:#e2e2e2;"></div>
<div class="a" style="left:0px;top:237.65px;width:12.3px;height:0.7px;background:#e2e2e2;"></div>
<div class="a" style="left:0px;top:246.65px;width:12.3px;height:0.7px;background:#e2e2e2;"></div>
<div class="a" style="left:0px;top:255.65px;width:12.3px;height:0.7px;background:#e2e2e2;"></div>
<div class="a" style="left:0px;top:264.65px;width:12.3px;height:0.7px;background:#e2e2e2;"></div>
<div class="a" style="left:0px;top:273.65px;width:12.3px;height:0.7px;background:#e2e2e2;"></div>
<div class="a" style="left:0px;top:282.65px;width:12.3px;height:0.7px;background:#e2e2e2;"></div>
<div class="a" style="left:0px;top:291.65px;width:12.3px;height:0.7px;background:#e2e2e2;"></div>
<div class="a" style="left:0px;top:300.65px;width:12.3px;height:0.7px;background:#e2e2e2;"></div>
<div class="a" style="left:0px;top:309.65px;width:12.3px;height:0.7px;background:#e2e2e2;"></div>
<div class="a" style="left:0px;top:318.65px;width:12.3px;height:0.7px;background:#e2e2e2;"></div>
<div class="a" style="left:0px;top:327.65px;width:12.3px;height:0.7px;background:#e2e2e2;"></div>
<div class="a" style="left:0px;top:336.65px;width:12.3px;height:0.7px;background:#e2e2e2;"></div>
<div class="a" style="left:0px;top:345.65px;width:12.3px;height:0.7px;background:#e2e2e2;"></div>
<div class="a" style="left:0px;top:350.65px;width:12.3px;height:0.7px;background:#e2e2e2;"></div>
<div class="a" style="left:0px;top:97.2px;width:12.3px;height:5.8px;background:#d6d6d6;"></div>
<div class="a" style="left:12.3px;top:88px;width:6.6px;height:9.2px;background:#e1e1e1;"></div>
<div class="a" style="left:0px;top:96.8px;width:281px;height:0.7px;background:#c8c8c8;"></div>
<div class="a" style="left:11.9px;top:88px;width:0.7px;height:263px;background:#d4d4d4;"></div>
<svg style="left:5.5px;top:90.2px;" width="6" height="6" viewBox="0 0 6 6"><path d="M5.6 0.2 V5.6 H0.2Z" fill="#c4c4c4"/></svg>
<div class="t" style="left:13.32px;top:83.44px;font-size:6.8px;color:#217346;">A</div>
<div class="t" style="left:22.84px;top:83.44px;font-size:6.8px;color:#3a3a3a;">B</div>
<div class="t" style="left:37.09px;top:83.44px;font-size:6.8px;color:#3a3a3a;">C</div>
<div class="t" style="left:53.56px;top:83.44px;font-size:6.8px;color:#3a3a3a;">D</div>
<div class="t" style="left:70.21px;top:83.44px;font-size:6.8px;color:#3a3a3a;">E</div>
<div class="t" style="left:86.87px;top:83.44px;font-size:6.8px;color:#3a3a3a;">F</div>
<div class="t" style="left:102.76px;top:83.44px;font-size:6.8px;color:#3a3a3a;">G</div>
<div class="t" style="left:119.44px;top:83.44px;font-size:6.8px;color:#3a3a3a;">H</div>
<div class="t" style="left:137.4px;top:83.44px;font-size:6.8px;color:#3a3a3a;">I</div>
<div class="t" style="left:153.12px;top:83.44px;font-size:6.8px;color:#3a3a3a;">J</div>
<div class="t" style="left:169.03px;top:83.44px;font-size:6.8px;color:#3a3a3a;">K</div>
<div class="t" style="left:185.88px;top:83.44px;font-size:6.8px;color:#3a3a3a;">L</div>
<div class="t" style="left:201.4px;top:83.44px;font-size:6.8px;color:#3a3a3a;">M</div>
<div class="t" style="left:218.26px;top:83.44px;font-size:6.8px;color:#3a3a3a;">N</div>
<div class="t" style="left:234.52px;top:83.44px;font-size:6.8px;color:#3a3a3a;">O</div>
<div class="t" style="left:251.38px;top:83.44px;font-size:6.8px;color:#3a3a3a;">P</div>
<div class="t" style="left:265.29px;top:83.44px;font-size:6.8px;color:#3a3a3a;">Q</div>
<div class="t" style="left:274.95px;top:83.44px;font-size:6.8px;color:#3a3a3a;">R</div>
<div class="a" style="left:0;top:0;width:12.3px;height:350.2px;overflow:hidden">
<div class="t" style="left:4.31px;top:90.29px;font-size:6.8px;color:#217346;">1</div>
<div class="t" style="left:4.31px;top:97.69px;font-size:6.8px;color:#333;">2</div>
<div class="t" style="left:4.31px;top:106.69px;font-size:6.8px;color:#333;">3</div>
<div class="t" style="left:4.31px;top:115.69px;font-size:6.8px;color:#333;">4</div>
<div class="t" style="left:4.31px;top:124.69px;font-size:6.8px;color:#333;">5</div>
<div class="t" style="left:4.31px;top:133.69px;font-size:6.8px;color:#333;">6</div>
<div class="t" style="left:4.31px;top:142.69px;font-size:6.8px;color:#333;">7</div>
<div class="t" style="left:4.31px;top:151.69px;font-size:6.8px;color:#333;">8</div>
<div class="t" style="left:4.31px;top:160.69px;font-size:6.8px;color:#333;">9</div>
<div class="t" style="left:2.43px;top:169.69px;font-size:6.8px;color:#333;">10</div>
<div class="t" style="left:2.66px;top:178.69px;font-size:6.8px;color:#333;">11</div>
<div class="t" style="left:2.43px;top:187.69px;font-size:6.8px;color:#333;">12</div>
<div class="t" style="left:2.43px;top:196.69px;font-size:6.8px;color:#333;">13</div>
<div class="t" style="left:2.43px;top:205.69px;font-size:6.8px;color:#333;">14</div>
<div class="t" style="left:2.43px;top:214.69px;font-size:6.8px;color:#333;">15</div>
<div class="t" style="left:2.43px;top:223.69px;font-size:6.8px;color:#333;">16</div>
<div class="t" style="left:2.43px;top:232.69px;font-size:6.8px;color:#333;">17</div>
<div class="t" style="left:2.43px;top:241.69px;font-size:6.8px;color:#333;">18</div>
<div class="t" style="left:2.43px;top:250.69px;font-size:6.8px;color:#333;">19</div>
<div class="t" style="left:2.43px;top:259.69px;font-size:6.8px;color:#333;">20</div>
<div class="t" style="left:2.43px;top:268.69px;font-size:6.8px;color:#333;">21</div>
<div class="t" style="left:2.43px;top:277.69px;font-size:6.8px;color:#333;">22</div>
<div class="t" style="left:2.43px;top:286.69px;font-size:6.8px;color:#333;">23</div>
<div class="t" style="left:2.43px;top:295.69px;font-size:6.8px;color:#333;">24</div>
<div class="t" style="left:2.43px;top:304.69px;font-size:6.8px;color:#333;">25</div>
<div class="t" style="left:2.43px;top:313.69px;font-size:6.8px;color:#333;">26</div>
<div class="t" style="left:2.43px;top:322.69px;font-size:6.8px;color:#333;">27</div>
<div class="t" style="left:2.43px;top:331.69px;font-size:6.8px;color:#333;">28</div>
<div class="t" style="left:2.43px;top:338.79px;font-size:6.8px;color:#333;">29</div>
</div>
<div class="a" style="left:12px;top:96.9px;width:7.2px;height:6.4px;border:1.1px solid #217346"></div>
<div class="a" style="left:17.8px;top:102px;width:1.6px;height:1.6px;background:#217346;"></div>
<div class="a" style="left:17.9px;top:102.7px;width:258.1px;height:243.7px;background:#2c332c;"></div>
<div class="a" style="left:19px;top:103.7px;width:256px;height:16.2px;background:#3a3a3a;"></div>
<div class="a" style="left:19.1px;top:120.8px;width:255.8px;height:224.3px;background:#c6e0b4;"></div>
<div class="t" style="left:42.1px;top:102.38px;font-size:10.5px;color:#f4f4f4;font-weight:bold;transform:scaleX(0.934);">FORMATION SELECTOR</div>
<div class="t" style="left:184.1px;top:102.09px;font-size:9.2px;color:#f4f4f4;font-weight:bold;transform:scaleX(0.845);">11</div>
<div class="t" style="left:199.8px;top:101.79px;font-size:8px;color:#f4f4f4;font-weight:bold;transform:scaleX(0.811);">POSITIONS SELECTED</div>
<div class="a" style="left:81.35px;top:129.9px;width:32.4px;height:26.3px;background:#e2efda;"></div>
<div class="a" style="left:130.8px;top:129.9px;width:32.4px;height:26.3px;background:#3a3a3a;"></div>
<div class="t" style="left:138.36px;top:133.69px;font-size:7.2px;color:#f2f2f2;font-weight:bold;transform:scaleX(0.800);">AF (A)</div>
<div class="a" style="left:180.25px;top:129.9px;width:32.4px;height:26.3px;background:#e2efda;"></div>
<div class="a" style="left:31.9px;top:165.98px;width:32.4px;height:26.3px;background:#e2efda;"></div>
<div class="a" style="left:81.35px;top:165.98px;width:32.4px;height:26.3px;background:#e2efda;"></div>
<div class="a" style="left:130.8px;top:165.98px;width:32.4px;height:26.3px;background:#3a3a3a;"></div>
<div class="t" style="left:138.36px;top:169.77px;font-size:7.2px;color:#f2f2f2;font-weight:bold;transform:scaleX(0.800);">SS (A)</div>
<div class="a" style="left:180.25px;top:165.98px;width:32.4px;height:26.3px;background:#e2efda;"></div>
<div class="a" style="left:229.7px;top:165.98px;width:32.4px;height:26.3px;background:#e2efda;"></div>
<div class="a" style="left:31.9px;top:202.06px;width:32.4px;height:26.3px;background:#3a3a3a;"></div>
<div class="t" style="left:39.78px;top:205.85px;font-size:7.2px;color:#f2f2f2;font-weight:bold;transform:scaleX(0.800);">IW (A)</div>
<div class="a" style="left:81.35px;top:202.06px;width:32.4px;height:26.3px;background:#e2efda;"></div>
<div class="a" style="left:130.8px;top:202.06px;width:32.4px;height:26.3px;background:#e2efda;"></div>
<div class="a" style="left:180.25px;top:202.06px;width:32.4px;height:26.3px;background:#e2efda;"></div>
<div class="a" style="left:229.7px;top:202.06px;width:32.4px;height:26.3px;background:#3a3a3a;"></div>
<div class="t" style="left:238.54px;top:205.85px;font-size:7.2px;color:#f2f2f2;font-weight:bold;transform:scaleX(0.800);">W (S)</div>
<div class="a" style="left:31.9px;top:238.14px;width:32.4px;height:26.3px;background:#e2efda;"></div>
<div class="a" style="left:81.35px;top:238.14px;width:32.4px;height:26.3px;background:#e2efda;"></div>
<div class="a" style="left:130.8px;top:238.14px;width:32.4px;height:26.3px;background:#3a3a3a;"></div>
<div class="t" style="left:137.73px;top:241.93px;font-size:7.2px;color:#f2f2f2;font-weight:bold;transform:scaleX(0.800);">DM (D)</div>
<div class="a" style="left:180.25px;top:238.14px;width:32.4px;height:26.3px;background:#e2efda;"></div>
<div class="a" style="left:229.7px;top:238.14px;width:32.4px;height:26.3px;background:#e2efda;"></div>
<div class="a" style="left:31.9px;top:274.22px;width:32.4px;height:26.3px;background:#3a3a3a;"></div>
<div class="t" style="left:39.46px;top:278.01px;font-size:7.2px;color:#f2f2f2;font-weight:bold;transform:scaleX(0.800);">FB (D)</div>
<div class="a" style="left:81.35px;top:274.22px;width:32.4px;height:26.3px;background:#3a3a3a;"></div>
<div class="t" style="left:88.59px;top:278.01px;font-size:7.2px;color:#f2f2f2;font-weight:bold;transform:scaleX(0.800);">CD (C)</div>
<div class="a" style="left:130.8px;top:274.22px;width:32.4px;height:26.3px;background:#3a3a3a;"></div>
<div class="t" style="left:135.96px;top:278.01px;font-size:7.2px;color:#f2f2f2;font-weight:bold;transform:scaleX(0.800);">NCB (D)</div>
<div class="a" style="left:180.25px;top:274.22px;width:32.4px;height:26.3px;background:#3a3a3a;"></div>
<div class="t" style="left:185.56px;top:278.01px;font-size:7.2px;color:#f2f2f2;font-weight:bold;transform:scaleX(0.800);">BPD (D)</div>
<div class="a" style="left:229.7px;top:274.22px;width:32.4px;height:26.3px;background:#3a3a3a;"></div>
<div class="t" style="left:236.31px;top:278.01px;font-size:7.2px;color:#f2f2f2;font-weight:bold;transform:scaleX(0.800);">WB (A)</div>
<div class="a" style="left:130.8px;top:310.3px;width:32.4px;height:26.3px;background:#3a3a3a;"></div>
<div class="t" style="left:138.2px;top:314.09px;font-size:7.2px;color:#f2f2f2;font-weight:bold;transform:scaleX(0.800);">SK (D)</div>
<div class="a" style="left:759.4px;top:88px;width:8.6px;height:310.5px;background:#e6e6e6;"></div>
<div class="a" style="left:759.6px;top:89.3px;width:8.2px;height:7.6px;background:#fff;"></div>
<svg style="left:761.9px;top:91.7px;" width="3.6" height="2.4" viewBox="0 0 3.6 2.4"><path d="M0 2.2 L1.8 0.2 L3.6 2.2Z" fill="#444"/></svg>
<div class="a" style="left:759.6px;top:98.3px;width:8.2px;height:287.5px;background:#fff;"></div>
<div class="a" style="left:766.2px;top:98.3px;width:1.8px;height:287.5px;background:#f0f0f0;"></div>
<div class="a" style="left:759.1px;top:98.3px;width:0.6px;height:287.5px;background:#d4d4d4;"></div>
<div class="a" style="left:759.6px;top:389.8px;width:8.2px;height:8.7px;background:#fff;"></div>
<svg style="left:761.9px;top:393px;" width="3.6" height="2.4" viewBox="0 0 3.6 2.4"><path d="M0 0.2 L1.8 2.2 L3.6 0.2Z" fill="#444"/></svg>
<div class="a" style="left:0px;top:397px;width:759.4px;height:11.3px;background:#e3e3e3;"></div>
<div class="a" style="left:0px;top:397px;width:759.4px;height:0.8px;background:#d6d6d6;"></div>
<svg style="left:8.8px;top:401.4px;" width="2.4" height="3" viewBox="0 0 2.4 3"><path d="M2 0.2 L0.4 1.5 L2 2.8" fill="none" stroke="#b0b0b0" stroke-width="0.6"/></svg>
<svg style="left:18.3px;top:401.4px;" width="2.4" height="3" viewBox="0 0 2.4 3"><path d="M0.4 0.2 L2 1.5 L0.4 2.8" fill="none" stroke="#b0b0b0" stroke-width="0.6"/></svg>
<div class="a" style="left:35.4px;top:398.5px;width:0.6px;height:8px;background:#cfcfcf;"></div>
<div class="t" style="left:39.8px;top:392.79px;font-size:6px;color:#555;transform:scaleX(0.837);">Base</div>
<div class="a" style="left:55.9px;top:397px;width:61.4px;height:11.3px;background:#fff;"></div>
<div class="a" style="left:57.5px;top:406.7px;width:58px;height:0.8px;background:#3c8a5a;"></div>
<div class="t" style="left:59.8px;top:392.79px;font-size:6px;color:#217346;font-weight:bold;transform:scaleX(0.978);">Formation Selector</div>
<div class="t" style="left:123px;top:392.79px;font-size:6px;color:#555;transform:scaleX(0.949);">Player Overview</div>
<div class="a" style="left:170.75px;top:398.5px;width:0.6px;height:8px;background:#d2d2d2;"></div>
<div class="t" style="left:175.75px;top:392.79px;font-size:6px;color:#555;transform:scaleX(0.938);">Overall Roles</div>
<div class="a" style="left:215.5px;top:398.5px;width:0.6px;height:8px;background:#d2d2d2;"></div>
<div class="t" style="left:220.75px;top:392.79px;font-size:6px;color:#555;transform:scaleX(0.973);">Top Rated by Role</div>
<div class="a" style="left:276.25px;top:398.5px;width:0.6px;height:8px;background:#d2d2d2;"></div>
<div class="t" style="left:280.5px;top:392.79px;font-size:6px;color:#555;transform:scaleX(0.960);">Overall Positions</div>
<div class="a" style="left:330.5px;top:398.5px;width:0.6px;height:8px;background:#d2d2d2;"></div>
<div class="t" style="left:335.5px;top:392.79px;font-size:6px;color:#555;">Top Rated by Position</div>
<div class="a" style="left:399.5px;top:398.5px;width:0.6px;height:8px;background:#d2d2d2;"></div>
<div class="t" style="left:404.25px;top:392.79px;font-size:6px;color:#555;transform:scaleX(0.973);">Squad Notes</div>
<div class="a" style="left:445px;top:398.5px;width:0.6px;height:8px;background:#d2d2d2;"></div>
<svg style="left:454.6px;top:399.9px;" width="6" height="6" viewBox="0 0 6 6"><circle cx="3" cy="3" r="2.6" fill="none" stroke="#9a9a9a" stroke-width="0.6"/><path d="M3 1.6 V4.4 M1.6 3 H4.4" stroke="#9a9a9a" stroke-width="0.6"/></svg>
<div class="a" style="left:506.4px;top:399.5px;width:0.6px;height:0.8px;background:#b8b8b8;"></div>
<div class="a" style="left:506.4px;top:401.5px;width:0.6px;height:0.8px;background:#b8b8b8;"></div>
<div class="a" style="left:506.4px;top:403.5px;width:0.6px;height:0.8px;background:#b8b8b8;"></div>
<div class="a" style="left:506.4px;top:405.5px;width:0.6px;height:0.8px;background:#b8b8b8;"></div>
<div class="a" style="left:512.2px;top:398.6px;width:239.2px;height:8.6px;background:#fff;"></div>
<div class="a" style="left:519.2px;top:398.6px;width:0.6px;height:8.6px;background:#e6e6e6;"></div>
<svg style="left:514.6px;top:401.5px;" width="2" height="2.8" viewBox="0 0 2 2.8"><path d="M1.9 0 V2.8 L0 1.4Z" fill="#444"/></svg>
<div class="a" style="left:751.4px;top:398.6px;width:7.8px;height:8.6px;background:#fff;"></div>
<div class="a" style="left:751.2px;top:398.6px;width:0.5px;height:8.6px;background:#e0e0e0;"></div>
<svg style="left:754.4px;top:401.5px;" width="2" height="2.8" viewBox="0 0 2 2.8"><path d="M0 0 V2.8 L1.9 1.4Z" fill="#444"/></svg>
<div class="a" style="left:0px;top:408.3px;width:768px;height:10.7px;background:#f3f3f3;"></div>
<div class="t" style="left:4.7px;top:403.29px;font-size:5.6px;color:#444;transform:scaleX(0.772);">Ready</div>
<svg style="left:26.6px;top:410.6px;" width="5.4" height="5.4" viewBox="0 0 5.4 5.4"><rect x="0.3" y="1.6" width="4.8" height="3.5" fill="none" stroke="#888" stroke-width="0.5"/><rect x="0.3" y="0.3" width="2.6" height="1.3" fill="#555"/><path d="M1 3 H4.4 M1 4.2 H4.4" stroke="#888" stroke-width="0.4"/></svg>
<div class="a" style="left:691.4px;top:413.1px;width:2.2px;height:0.6px;background:#999;"></div>
<div class="a" style="left:696.6px;top:413.1px;width:45px;height:0.6px;background:#8a8a8a;"></div>
<div class="a" style="left:718.2px;top:410.7px;width:2px;height:5px;background:#444;border-radius:0.5px"></div>
<svg style="left:743.8px;top:411.9px;" width="2.6" height="2.6" viewBox="0 0 2.6 2.6"><path d="M1.3 0 V2.6 M0 1.3 H2.6" stroke="#888" stroke-width="0.55"/></svg>
<div class="t" style="left:753.5px;top:403.29px;font-size:6px;color:#555;transform:scaleX(0.736);">100%</div>
</body></html>
